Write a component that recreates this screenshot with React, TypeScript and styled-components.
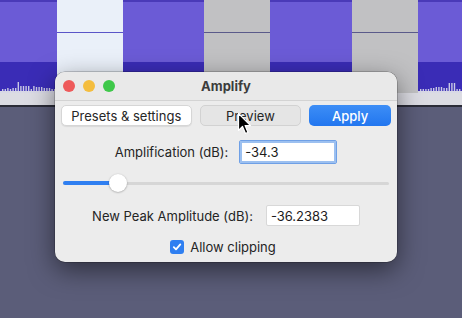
import styled, { createGlobalStyle } from "styled-components";

const GlobalStyle = createGlobalStyle`
  html, body {
    margin: 0;
    padding: 0;
    width: 462px;
    height: 318px;
    overflow: hidden;
    background: #5b5d79;
  }
  * {
    box-sizing: border-box;
  }
`;

const Desktop = styled.div`
  position: relative;
  width: 462px;
  height: 318px;
  background: #5b5d79;
  font-family: Inter, "Noto Sans", "Liberation Sans", sans-serif;
  overflow: hidden;
`;

const Track = styled.div`
  display: flex;
  height: 93px;
`;

const Clip = styled.div<{ $w: number; $tone: "light" | "gray" }>`
  position: relative;
  width: ${({ $w }) => $w}px;
  height: 100%;
  background: ${({ $tone }) => ($tone === "light" ? "#eaf0f9" : "#c1c1c3")};

  &::after {
    content: "";
    position: absolute;
    left: 0;
    right: 0;
    top: 32px;
    height: 1px;
    background: ${({ $tone }) => ($tone === "light" ? "#5a55c8" : "#5a5a8a")};
  }
`;

const WaveClip = styled.div<{ $w: number }>`
  width: ${({ $w }) => $w}px;
  height: 100%;
  display: flex;
  flex-direction: column;
  border-top: 2px solid #4a3ab8;
`;

const WaveTop = styled.div`
  height: 60px;
  background: #6b5bd6;
`;

const WaveBottom = styled.div`
  flex: 1;
  background: #3a2cb6;
  display: flex;
  align-items: flex-end;
  border-bottom: 2px solid #d8d8e6;
`;

const TrackFooter = styled.div`
  height: 14px;
  background: #dcdce3;
  border-bottom: 2px solid #2b2c38;
`;

const Window = styled.div`
  position: absolute;
  left: 55px;
  top: 72px;
  width: 342px;
  height: 190px;
  background: #ececec;
  border-radius: 10px;
  box-shadow: 0 0 0 0.5px rgba(0, 0, 0, 0.35), 0 8px 26px rgba(0, 0, 0, 0.5);
  overflow: hidden;
  color: #242424;
  font-size: 13px;
`;

const TitleBar = styled.div`
  position: relative;
  height: 29px;
  display: flex;
  align-items: center;
  padding-left: 8px;
  gap: 8px;
  background: #e9e9e9;
  border-bottom: 1px solid #d3d3d3;
`;

const Light = styled.span<{ $color: string }>`
  width: 12px;
  height: 12px;
  border-radius: 50%;
  background: ${({ $color }) => $color};
`;

const Title = styled.div`
  position: absolute;
  left: 0;
  right: 0;
  text-align: center;
  font-weight: 700;
  color: #3c3c3c;
`;

const Body = styled.div`
  padding: 4px 6px 0;
  display: flex;
  flex-direction: column;
`;

const ButtonRow = styled.div`
  display: flex;
  gap: 8px;
  height: 21px;
`;

const Button = styled.div<{ $w: number; $kind: "plain" | "muted" | "primary" }>`
  width: ${({ $w }) => $w}px;
  height: 21px;
  border-radius: 5px;
  display: flex;
  align-items: center;
  justify-content: center;
  font-size: 13px;
  ${({ $kind }) =>
    $kind === "primary"
      ? `background: linear-gradient(#3d8ef6, #2276ef); color: #fff; font-weight: 500;`
      : $kind === "muted"
      ? `background: #e5e5e5; border: 1px solid #d2d2d2; color: #262626;`
      : `background: #fff; border: 1px solid #d6d6d6; box-shadow: 0 1px 1px rgba(0,0,0,0.08); color: #262626;`}
`;

const FieldRow = styled.div<{ $gap: number; $top: number }>`
  display: flex;
  justify-content: center;
  align-items: center;
  gap: ${({ $gap }) => $gap}px;
  margin-top: ${({ $top }) => $top}px;
`;

const Field = styled.div<{ $w: number; $focus?: boolean }>`
  width: ${({ $w }) => $w}px;
  height: ${({ $focus }) => ($focus ? 24 : 21)}px;
  background: #fff;
  border: 1px solid ${({ $focus }) => ($focus ? "#6fa0e6" : "#d8d8d8")};
  box-shadow: ${({ $focus }) => ($focus ? "inset 0 0 0 2px #9cc0f0" : "none")};
  border-radius: 2px;
  display: flex;
  align-items: center;
  padding-left: ${({ $focus }) => ($focus ? 5 : 4)}px;
  color: #1c1c1c;
`;

const Slider = styled.div`
  position: relative;
  margin: 10px 2px 0;
  height: 18px;
  display: flex;
  align-items: center;
`;

const SliderTrack = styled.div`
  width: 100%;
  height: 3px;
  border-radius: 2px;
  background: #d6d6d6;
`;

const SliderFill = styled.div`
  position: absolute;
  left: 0;
  top: 7px;
  height: 4px;
  border-radius: 2px;
  background: #2f7ff1;
`;

const Knob = styled.div`
  position: absolute;
  top: 0;
  width: 18px;
  height: 18px;
  border-radius: 50%;
  background: #fff;
  box-shadow: 0 0.5px 2px rgba(0, 0, 0, 0.35);
`;

const CheckRow = styled.label`
  display: flex;
  justify-content: center;
  align-items: center;
  gap: 6px;
  margin-top: 13px;
  margin-right: 6px;
`;

const Checkbox = styled.span`
  width: 14px;
  height: 14px;
  border-radius: 3px;
  background: #2f7ff1;
  display: flex;
  align-items: center;
  justify-content: center;
`;

const Cursor = styled.svg`
  position: absolute;
  left: 237px;
  top: 112px;
`;

function WaveBars({ w, heights }: { w: number; heights: number[] }) {
  return (
    <svg width={w} height={11} viewBox={`0 0 ${w} 11`}>
      {heights.map((h, i) => (
        <rect key={i} x={2 + i * 2.6} y={11 - h} width={1.4} height={h} fill="#c9c9e4" />
      ))}
    </svg>
  );
}

const leftBars = [2, 2, 3, 2, 3, 3, 9, 5, 5, 5, 5, 2, 5, 4, 4, 4, 3, 3, 3, 2, 2, 2];
const rightBars = [2, 2, 2, 2, 3, 3, 4, 4, 4, 3, 3, 8, 8, 8, 2, 2];

export default function App() {
  const pct = 0.17;
  return (
    <>
      <GlobalStyle />
      <Desktop>
        <Track>
          <WaveClip $w={57}>
            <WaveTop />
            <WaveBottom>
              <WaveBars w={57} heights={leftBars} />
            </WaveBottom>
          </WaveClip>
          <Clip $w={66} $tone="light" />
          <WaveClip $w={81}>
            <WaveTop />
            <WaveBottom />
          </WaveClip>
          <Clip $w={66} $tone="gray" />
          <WaveClip $w={82}>
            <WaveTop />
            <WaveBottom />
          </WaveClip>
          <Clip $w={66} $tone="gray" />
          <WaveClip $w={44}>
            <WaveTop />
            <WaveBottom>
              <WaveBars w={44} heights={rightBars} />
            </WaveBottom>
          </WaveClip>
        </Track>
        <TrackFooter />

        <Window>
          <TitleBar>
            <Light $color="#ee5a5a" />
            <Light $color="#f4bd3e" />
            <Light $color="#3fc84a" />
            <Title>Amplify</Title>
          </TitleBar>
          <Body>
            <ButtonRow>
              <Button $w={131} $kind="plain">Presets &amp; settings</Button>
              <Button $w={102} $kind="muted">Preview</Button>
              <Button $w={82} $kind="primary">Apply</Button>
            </ButtonRow>

            <FieldRow $gap={11} $top={14}>
              <span>Amplification (dB):</span>
              <Field $w={98} $focus>-34.3</Field>
            </FieldRow>

            <Slider>
              <SliderTrack />
              <SliderFill style={{ width: `${pct * 100}%` }} />
              <Knob style={{ left: `calc(${pct * 100}% - 9px)` }} />
            </Slider>

            <FieldRow $gap={13} $top={13}>
              <span>New Peak Amplitude (dB):</span>
              <Field $w={94}>-36.2383</Field>
            </FieldRow>

            <CheckRow>
              <Checkbox>
                <svg width="10" height="10" viewBox="0 0 10 10">
                  <path d="M1.8 5.2 L4 7.4 L8.3 2.4" fill="none" stroke="#fff" strokeWidth="1.8" strokeLinecap="round" strokeLinejoin="round" />
                </svg>
              </Checkbox>
              <span>Allow clipping</span>
            </CheckRow>
          </Body>
        </Window>

        <Cursor width="16" height="24" viewBox="0 0 16 24">
          <path d="M1.5 1.5 L1.5 18.5 L5.5 14.5 L8.5 21.5 L11 20.4 L8.1 13.6 L13.5 13.6 Z" fill="#000" stroke="#fff" strokeWidth="1.2" strokeLinejoin="round" />
        </Cursor>
      </Desktop>
    </>
  );
}
